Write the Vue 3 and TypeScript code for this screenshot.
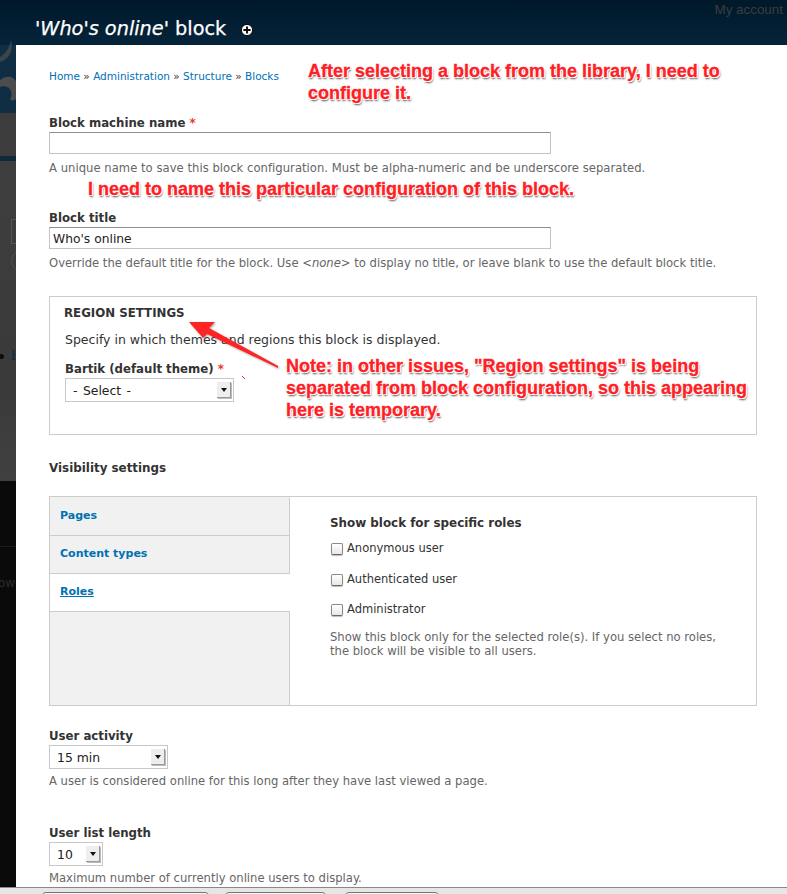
<script setup lang="ts">
const crumbs = ['Home', 'Administration', 'Structure', 'Blocks']
const tabs = [
  { name: 'Pages', active: false },
  { name: 'Content types', active: false },
  { name: 'Roles', active: true },
]
const roles = ['Anonymous user', 'Authenticated user', 'Administrator']
</script>

<template>
  <div class="page">
    <header class="top">
      <h1 class="title">'<em>Who's online</em>' block</h1>
      <svg class="plus" width="14" height="14" viewBox="0 0 14 14" aria-hidden="true">
        <circle cx="7" cy="7" r="5.6" fill="#fff" stroke="#0a0a0a" stroke-width="1" />
        <path d="M3.4 7h7.2M7 3.4v7.2" stroke="#0a0a0a" stroke-width="1.9" />
      </svg>
      <span class="account">My account</span>
    </header>

    <div class="stage">
      <aside class="strip">
        <div class="strip-logo">
          <svg class="logo" width="16" height="73" viewBox="0 0 16 73" aria-hidden="true">
            <path d="M0 17C5 14 9 9 11 0C13 8 11 14 8 17C6 19 3 21 0 22Z" fill="#3d4448" />
            <path d="M0 40C6 35 13 36 16 41V59C13 61 11 61 10 59C12 57 12 51 9 48C6 46 3 46 0 47Z" fill="#4a4c4e" />
          </svg>
        </div>
        <div class="strip-gray"></div>
        <div class="strip-blue"></div>
        <div class="strip-main">
          <span class="ghost-box"></span>
          <span class="ghost-round"></span>
          <span class="ghost-dot"></span>
          <span class="ghost-h">H</span>
        </div>
        <div class="strip-dark">
          <span class="ghost-rule"></span>
          <span class="ghost-text">owe</span>
        </div>
      </aside>

      <main class="modal">
        <nav class="crumbs">
          <template v-for="(c, i) in crumbs" :key="c">
            <span v-if="i" class="sep"> » </span><a href="#">{{ c }}</a>
          </template>
        </nav>

        <div class="field first">
          <label class="label">Block machine name <span class="req">*</span></label>
          <input class="text" type="text" />
          <p class="desc">A unique name to save this block configuration. Must be alpha-numeric and be underscore separated.</p>
        </div>

        <div class="field second">
          <label class="label">Block title</label>
          <input class="text" type="text" value="Who's online" />
          <p class="desc">Override the default title for the block. Use <em>&lt;none&gt;</em> to display no title, or leave blank to use the default block title.</p>
        </div>

        <section class="region">
          <h2 class="legend">REGION SETTINGS</h2>
          <p class="region-text">Specify in which themes and regions this block is displayed.</p>
          <label class="label bartik">Bartik (default theme) <span class="req">*</span></label>
          <div class="select wide"><span>- Select -</span><i class="btn"></i></div>
        </section>

        <h2 class="vis">Visibility settings</h2>

        <section class="tabs">
          <ul class="tab-list">
            <li v-for="t in tabs" :key="t.name" class="tab" :class="{ active: t.active }">
              <a href="#">{{ t.name }}</a>
            </li>
            <li class="tab-fill"></li>
          </ul>
          <div class="pane">
            <h3 class="pane-title">Show block for specific roles</h3>
            <label v-for="r in roles" :key="r" class="role">
              <input type="checkbox" class="check" /><span>{{ r }}</span>
            </label>
            <p class="desc pane-desc">Show this block only for the selected role(s). If you select no roles, the block will be visible to all users.</p>
          </div>
        </section>

        <div class="field activity">
          <label class="label">User activity</label>
          <div class="select mid"><span>15 min</span><i class="btn"></i></div>
          <p class="desc">A user is considered online for this long after they have last viewed a page.</p>
        </div>

        <div class="field length">
          <label class="label">User list length</label>
          <div class="select small"><span>10</span><i class="btn"></i></div>
          <p class="desc">Maximum number of currently online users to display.</p>
        </div>

        <p class="note note-a">After selecting a block from the library, I need to configure it.</p>
        <p class="note note-b">I need to name this particular configuration of this block.</p>
        <p class="note note-c">Note: in other issues, "Region settings" is being separated from block configuration, so this appearing here is temporary.</p>
        <svg class="arrow" width="110" height="62" viewBox="0 0 110 62" aria-hidden="true">
          <path class="arrow-shape" d="M2 2H28L22 8L91 46L91 48L20 14L16 18Z" fill="#ff2323" />
          <path d="M55 56l3 3" stroke="#ff2323" stroke-width="1" />
        </svg>
      </main>
    </div>

    <footer class="bar">
      <span class="pill p1"></span>
      <span class="pill p2"></span>
      <span class="pill p3"></span>
    </footer>
  </div>
</template>

<style>
html, body { margin: 0; padding: 0; background: #fff; }
</style>

<style scoped>
.page {
  width: 787px;
  height: 894px;
  overflow: hidden;
  display: flex;
  flex-direction: column;
  font-family: "DejaVu Sans", "Liberation Sans", sans-serif;
  font-size: 11.6px;
  color: #333;
}
.top {
  height: 45px;
  flex: none;
  display: flex;
  align-items: flex-start;
  background: linear-gradient(#00182a, #05243a);
}
.title {
  margin: 15px 0 0 35px;
  font-size: 19.3px;
  line-height: 27px;
  font-weight: 400;
  color: #fff;
  white-space: nowrap;
  -webkit-text-stroke: 0.25px #fff;
}
.plus { margin: 23px 0 0 14px; }
.account {
  margin: 2px 4px 0 auto;
  font-family: "Liberation Sans", sans-serif;
  font-size: 13.4px;
  line-height: 16px;
  color: #3a3d40;
}
.stage { flex: 1; min-height: 0; display: flex; }
.strip {
  width: 16px;
  flex: none;
  display: flex;
  flex-direction: column;
}
.strip-logo { position: relative; height: 68px; background: #0f2e44; }
.logo { position: absolute; left: 0; top: -5px; display: block; }
.strip-gray { height: 43px; background: #3c3c3c; }
.strip-blue { height: 5px; background: #10293b; }
.strip-main {
  position: relative;
  height: 320px;
  background: linear-gradient(#3e3e3e, #3a3a3a 70%, #404040);
}
.ghost-box {
  position: absolute;
  left: 11px;
  top: 58px;
  width: 8px;
  height: 23px;
  border: 1px solid #555;
}
.ghost-round {
  position: absolute;
  left: 11px;
  top: 89px;
  width: 20px;
  height: 20px;
  border: 1px solid #505050;
  border-radius: 50%;
}
.ghost-dot {
  position: absolute;
  left: -1px;
  top: 193px;
  width: 5px;
  height: 5px;
  border-radius: 50%;
  background: #0c0c0c;
}
.ghost-h {
  position: absolute;
  left: 11px;
  top: 187px;
  font-family: "Liberation Serif", serif;
  font-size: 14px;
  line-height: 16px;
  color: #0d2c46;
}
.strip-dark { position: relative; flex: 1; background: #0a0a0a; }
.ghost-rule {
  position: absolute;
  left: 0;
  right: 0;
  top: 65px;
  height: 1px;
  background: #1c1c1c;
}
.ghost-text {
  position: absolute;
  left: -2px;
  top: 95px;
  font-size: 12px;
  line-height: 14px;
  color: #2c2c2c;
}
.modal {
  position: relative;
  flex: 1;
  min-width: 0;
  background: #fff;
  padding: 0 30px 0 33px;
  overflow: hidden;
}
.crumbs { margin-top: 24px; font-size: 10.5px; line-height: 14px; white-space: pre; }
a { color: #0071b3; text-decoration: none; }
.sep { color: #333; }
.field { display: flex; flex-direction: column; align-items: flex-start; }
.first { margin-top: 33px; }
.second { margin-top: 36px; }
.label { font-size: 11.75px; font-weight: 700; line-height: 14px; margin-bottom: 2px; }
.req { color: #e8392c; }
.text {
  box-sizing: border-box;
  width: 502px;
  height: 22px;
  margin: 0;
  padding: 1px 3px 0;
  border: 1px solid #c4c4c4;
  border-top-color: #8e8e8e;
  font: 12.3px "DejaVu Sans", sans-serif;
  color: #222;
  outline: none;
}
.desc {
  margin: 7px 0 0;
  line-height: 14px;
  color: #666;
  white-space: nowrap;
}
.first .desc { letter-spacing: 0.03px; }
.region {
  box-sizing: border-box;
  height: 139px;
  margin-top: 26px;
  padding: 9px 14px 9px 15px;
  border: 1px solid #ccc;
}
.legend {
  margin: 0 0 0 -1px;
  font-size: 11.8px;
  line-height: 14px;
  font-weight: 700;
  color: #333;
}
.region-text { margin: 13px 0 0; font-size: 12.5px; line-height: 14px; }
.label.bartik { display: block; margin: 15px 0 2px; }
.select {
  box-sizing: border-box;
  position: relative;
  height: 24px;
  padding-left: 7px;
  border: 1px solid #c8c8c8;
  font-size: 12.4px;
  line-height: 24px;
  color: #222;
  background: #fff;
}
.select.wide { width: 169px; word-spacing: 1.5px; }
.select.mid { width: 119px; }
.select.small { width: 54px; }
.btn {
  position: absolute;
  top: 3px;
  right: 2px;
  width: 13px;
  height: 15px;
  background: #eee;
  border-right: 1px solid #999;
  border-bottom: 1px solid #999;
  box-shadow: 1px 1px 0 #bbb;
}
.btn::after {
  content: "";
  position: absolute;
  left: 4px;
  top: 6px;
  border-left: 3px solid transparent;
  border-right: 3px solid transparent;
  border-top: 4px solid #111;
}
.vis {
  margin: 26px 0 0;
  font-size: 11.9px;
  line-height: 14px;
  font-weight: 700;
  color: #333;
}
.tabs {
  box-sizing: border-box;
  display: flex;
  height: 210px;
  margin-top: 21px;
  border: 1px solid #ccc;
}
.tab-list {
  width: 240px;
  flex: none;
  margin: 0;
  padding: 1px 0 0;
  list-style: none;
  display: flex;
  flex-direction: column;
  box-sizing: border-box;
  background: #f1f1f1;
}
.tab {
  box-sizing: border-box;
  height: 38px;
  padding: 11px 10px 0;
  font-size: 11px;
  font-weight: 700;
  line-height: 14px;
  background: #f1f1f1;
  border-bottom: 1px solid #ccc;
  border-right: 1px solid #ccc;
}
.tab.active { background: #fff; border-right: 0; }
.tab.active a { text-decoration: underline; }
.tab-fill { flex: 1; background: #f1f1f1; border-right: 1px solid #ccc; }
.pane { flex: 1; padding: 19px 40px 0; }
.pane-title {
  margin: 0 0 11px;
  font-size: 11.9px;
  line-height: 14px;
  font-weight: 700;
  color: #333;
}
.role {
  display: flex;
  align-items: flex-start;
  height: 30.5px;
  font-size: 11.5px;
  line-height: 14px;
  color: #333;
}
.check {
  appearance: none;
  box-sizing: border-box;
  width: 12px;
  height: 12px;
  margin: 2px 4px 0 1px;
  border: 1px solid #8a8a8a;
  border-bottom-color: #666;
  border-radius: 2px;
  background: linear-gradient(#fff, #e8e8e8);
  box-shadow: 0 1px 1px #bbb;
}
.pane-desc { margin-top: -3px; white-space: normal; width: 395px; }
.activity { margin-top: 23px; }
.activity .desc, .length .desc { margin-top: 5px; }
.length { margin-top: 38px; }
.note {
  position: absolute;
  margin: 0;
  font-family: "Liberation Sans", sans-serif;
  font-size: 18px;
  font-weight: 700;
  line-height: 22px;
  color: #ff2026;
  -webkit-text-stroke: 0.3px #ff2026;
  text-shadow:
    1px 0 0 #fff, -1px 0 0 #fff, 0 1px 0 #fff, 0 -1px 0 #fff,
    1px 1px 0 #fff, -1px -1px 0 #fff, 1px -1px 0 #fff, -1px 1px 0 #fff,
    1px 2px 2px rgba(0, 0, 0, 0.7);
}
.note-a { left: 292px; top: 15px; width: 430px; }
.note-b { left: 72px; top: 133px; white-space: nowrap; }
.note-c { left: 270px; top: 310px; width: 480px; }
.arrow { position: absolute; left: 171px; top: 275px; }
.arrow-shape { filter: drop-shadow(1px 1px 1px rgba(0, 0, 0, 0.35)); }
.bar {
  position: relative;
  height: 7px;
  flex: none;
  box-sizing: border-box;
  border-top: 1px solid #888;
  background: #e6e6e6;
  overflow: hidden;
}
.pill {
  position: absolute;
  top: 4px;
  height: 10px;
  box-sizing: border-box;
  border: 1px solid #777;
  border-radius: 6px;
  background: #f4f4f4;
}
.p1 { left: 41px; width: 169px; }
.p2 { left: 224px; width: 103px; }
.p3 { left: 344px; width: 96px; }
</style>
